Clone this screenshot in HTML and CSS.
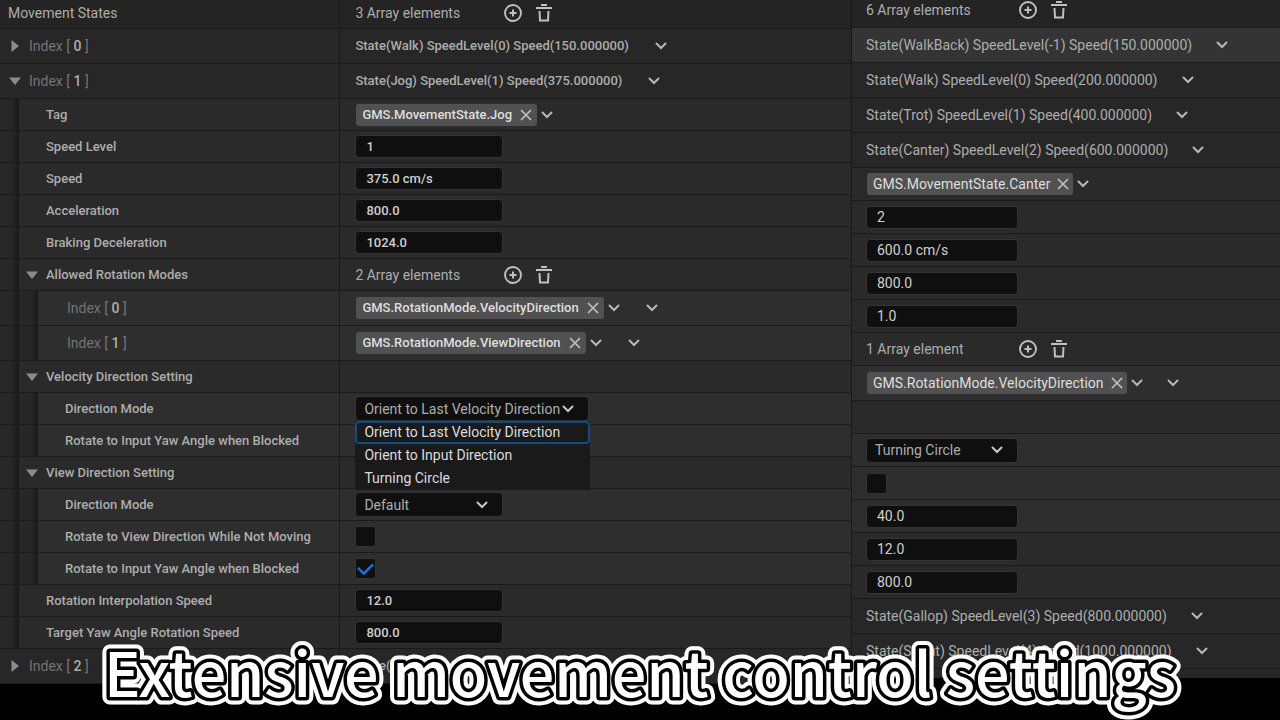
FILE: index.html
```html
<!DOCTYPE html>
<html lang="en">
<head>
	<meta charset="utf-8">
	<title>Movement States</title>
	<link rel="stylesheet" href="styles.css">
</head>
<body>
<svg class="defs">
	<symbol id="chevron" viewBox="0 0 12 8"><path d="M1.500 1.500L6 6l4.500-4.500" fill="none" stroke="currentColor" stroke-width="2" stroke-linecap="round"/></symbol>
	<symbol id="cross" viewBox="0 0 12 12"><path d="M1.500 1.500l9 9M10.500 1.500l-9 9" fill="none" stroke="currentColor" stroke-width="1.700" stroke-linecap="round"/></symbol>
	<symbol id="plus" viewBox="0 0 18 18"><circle cx="9" cy="9" r="8" fill="none" stroke="currentColor" stroke-width="1.900"/><path d="M9 5.500v7M5.500 9h7" stroke="currentColor" stroke-width="2"/></symbol>
	<symbol id="trash" viewBox="0 0 16 18"><path d="M5 1h6M0 4h16" fill="none" stroke="currentColor" stroke-width="2"/><path d="M3.500 7l.500 9.500h8l.500-9.500" fill="none" stroke="currentColor" stroke-width="2"/></symbol>
	<symbol id="closed" viewBox="0 0 12 12"><path d="M2.500 0v12l7.500-6z" fill="currentColor"/></symbol>
	<symbol id="open" viewBox="0 0 12 12"><path d="M0 2.500h12l-6 7.500z" fill="currentColor"/></symbol>
</svg>

<main class="panels">
	<section class="panel left">
		<div class="row head">
			<div class="name">Movement States</div>
			<div class="value"><span class="count">3 Array elements</span><button class="icon" aria-label="Add"><svg class="plus"><use href="#plus"/></svg></button><button class="icon" aria-label="Clear"><svg class="trash"><use href="#trash"/></svg></button></div>
		</div>
		<div class="row index">
			<div class="name"><button class="arrow" aria-label="Expand"><svg><use href="#closed"/></svg></button><span class="idx">Index [ <b>0</b> ]</span></div>
			<div class="value">State(Walk) SpeedLevel(0) Speed(150.000000)<button class="more" aria-label="Options"><svg><use href="#chevron"/></svg></button></div>
		</div>
		<div class="row index">
			<div class="name"><button class="arrow" aria-label="Collapse"><svg><use href="#open"/></svg></button><span class="idx">Index [ <b>1</b> ]</span></div>
			<div class="value">State(Jog) SpeedLevel(1) Speed(375.000000)<button class="more" aria-label="Options"><svg><use href="#chevron"/></svg></button></div>
		</div>
		<div class="row d2">
			<div class="name"><i class="guide"></i><span class="text">Tag</span></div>
			<div class="value"><span class="tag">GMS.MovementState.Jog<button aria-label="Remove"><svg><use href="#cross"/></svg></button></span><button class="pick" aria-label="Pick tag"><svg><use href="#chevron"/></svg></button></div>
		</div>
		<div class="row d2">
			<div class="name"><i class="guide"></i><label class="text" for="level">Speed Level</label></div>
			<div class="value"><input type="text" class="field" id="level" value="1"></div>
		</div>
		<div class="row d2">
			<div class="name"><i class="guide"></i><label class="text" for="speed">Speed</label></div>
			<div class="value"><input type="text" class="field" id="speed" value="375.0 cm/s"></div>
		</div>
		<div class="row d2">
			<div class="name"><i class="guide"></i><label class="text" for="accel">Acceleration</label></div>
			<div class="value"><input type="text" class="field" id="accel" value="800.0"></div>
		</div>
		<div class="row d2">
			<div class="name"><i class="guide"></i><label class="text" for="brake">Braking Deceleration</label></div>
			<div class="value"><input type="text" class="field" id="brake" value="1024.0"></div>
		</div>
		<div class="row d2">
			<div class="name"><i class="guide"></i><button class="arrow" aria-label="Collapse"><svg><use href="#open"/></svg></button>Allowed Rotation Modes</div>
			<div class="value"><span class="count">2 Array elements</span><button class="icon" aria-label="Add"><svg class="plus"><use href="#plus"/></svg></button><button class="icon" aria-label="Clear"><svg class="trash"><use href="#trash"/></svg></button></div>
		</div>
		<div class="row index d3">
			<div class="name"><i class="guide"></i><i class="guide"></i><span class="text idx">Index [ <b>0</b> ]</span></div>
			<div class="value"><span class="tag">GMS.RotationMode.VelocityDirection<button aria-label="Remove"><svg><use href="#cross"/></svg></button></span><button class="pick" aria-label="Pick tag"><svg><use href="#chevron"/></svg></button><button class="more" aria-label="Options"><svg><use href="#chevron"/></svg></button></div>
		</div>
		<div class="row index d3">
			<div class="name"><i class="guide"></i><i class="guide"></i><span class="text idx">Index [ <b>1</b> ]</span></div>
			<div class="value"><span class="tag">GMS.RotationMode.ViewDirection<button aria-label="Remove"><svg><use href="#cross"/></svg></button></span><button class="pick" aria-label="Pick tag"><svg><use href="#chevron"/></svg></button><button class="more" aria-label="Options"><svg><use href="#chevron"/></svg></button></div>
		</div>
		<div class="row d2">
			<div class="name"><i class="guide"></i><button class="arrow" aria-label="Collapse"><svg><use href="#open"/></svg></button>Velocity Direction Setting</div>
			<div class="value"></div>
		</div>
		<div class="row d3">
			<div class="name"><i class="guide"></i><i class="guide"></i><label class="text" for="vmode">Direction Mode</label></div>
			<div class="value">
				<div class="combo wide">
					<select id="vmode"><option>Orient to Last Velocity Direction</option></select>
					<svg><use href="#chevron"/></svg>
					<ul class="menu">
						<li class="current">Orient to Last Velocity Direction</li>
						<li>Orient to Input Direction</li>
						<li>Turning Circle</li>
					</ul>
				</div>
			</div>
		</div>
		<div class="row d3">
			<div class="name"><i class="guide"></i><i class="guide"></i><span class="text">Rotate to Input Yaw Angle when Blocked</span></div>
			<div class="value"></div>
		</div>
		<div class="row d2">
			<div class="name"><i class="guide"></i><button class="arrow" aria-label="Collapse"><svg><use href="#open"/></svg></button>View Direction Setting</div>
			<div class="value"></div>
		</div>
		<div class="row d3">
			<div class="name"><i class="guide"></i><i class="guide"></i><label class="text" for="dmode">Direction Mode</label></div>
			<div class="value"><div class="combo"><select id="dmode"><option>Default</option></select><svg><use href="#chevron"/></svg></div></div>
		</div>
		<div class="row d3">
			<div class="name"><i class="guide"></i><i class="guide"></i><label class="text" for="still">Rotate to View Direction While Not Moving</label></div>
			<div class="value"><input type="checkbox" class="check" id="still"></div>
		</div>
		<div class="row d3">
			<div class="name"><i class="guide"></i><i class="guide"></i><label class="text" for="blocked">Rotate to Input Yaw Angle when Blocked</label></div>
			<div class="value"><input type="checkbox" class="check" id="blocked" checked></div>
		</div>
		<div class="row d2">
			<div class="name"><i class="guide"></i><label class="text" for="interp">Rotation Interpolation Speed</label></div>
			<div class="value"><input type="text" class="field" id="interp" value="12.0"></div>
		</div>
		<div class="row d2">
			<div class="name"><i class="guide"></i><label class="text" for="yaw">Target Yaw Angle Rotation Speed</label></div>
			<div class="value"><input type="text" class="field" id="yaw" value="800.0"></div>
		</div>
		<div class="row index">
			<div class="name"><button class="arrow" aria-label="Expand"><svg><use href="#closed"/></svg></button><span class="idx">Index [ <b>2</b> ]</span></div>
			<div class="value">State(</div>
		</div>
	</section>

	<section class="panel right">
		<div class="row head"><div class="value"><span class="count">6 Array elements</span><button class="icon" aria-label="Add"><svg class="plus"><use href="#plus"/></svg></button><button class="icon" aria-label="Clear"><svg class="trash"><use href="#trash"/></svg></button></div></div>
		<div class="row index hover"><div class="value">State(WalkBack) SpeedLevel(-1) Speed(150.000000)<button class="more" aria-label="Options"><svg><use href="#chevron"/></svg></button></div></div>
		<div class="row index"><div class="value">State(Walk) SpeedLevel(0) Speed(200.000000)<button class="more" aria-label="Options"><svg><use href="#chevron"/></svg></button></div></div>
		<div class="row index"><div class="value">State(Trot) SpeedLevel(1) Speed(400.000000)<button class="more" aria-label="Options"><svg><use href="#chevron"/></svg></button></div></div>
		<div class="row index"><div class="value">State(Canter) SpeedLevel(2) Speed(600.000000)<button class="more" aria-label="Options"><svg><use href="#chevron"/></svg></button></div></div>
		<div class="row d2"><div class="value"><span class="tag">GMS.MovementState.Canter<button aria-label="Remove"><svg><use href="#cross"/></svg></button></span><button class="pick" aria-label="Pick tag"><svg><use href="#chevron"/></svg></button></div></div>
		<div class="row d2"><div class="value"><input type="text" class="field" aria-label="Speed Level" value="2"></div></div>
		<div class="row d2"><div class="value"><input type="text" class="field" aria-label="Speed" value="600.0 cm/s"></div></div>
		<div class="row d2"><div class="value"><input type="text" class="field" aria-label="Acceleration" value="800.0"></div></div>
		<div class="row d2"><div class="value"><input type="text" class="field" aria-label="Braking Deceleration" value="1.0"></div></div>
		<div class="row d2"><div class="value"><span class="count">1 Array element</span><button class="icon" aria-label="Add"><svg class="plus"><use href="#plus"/></svg></button><button class="icon" aria-label="Clear"><svg class="trash"><use href="#trash"/></svg></button></div></div>
		<div class="row index d3"><div class="value"><span class="tag">GMS.RotationMode.VelocityDirection<button aria-label="Remove"><svg><use href="#cross"/></svg></button></span><button class="pick" aria-label="Pick tag"><svg><use href="#chevron"/></svg></button><button class="more" aria-label="Options"><svg><use href="#chevron"/></svg></button></div></div>
		<div class="row d2"><div class="value"></div></div>
		<div class="row d3"><div class="value"><div class="combo"><select aria-label="Direction Mode"><option>Turning Circle</option></select><svg><use href="#chevron"/></svg></div></div></div>
		<div class="row d3"><div class="value"><input type="checkbox" class="check" aria-label="Rotate to Input Yaw Angle when Blocked"></div></div>
		<div class="row d3"><div class="value"><input type="text" class="field" aria-label="Turning Rate" value="40.0"></div></div>
		<div class="row d2"><div class="value"><input type="text" class="field" aria-label="Rotation Interpolation Speed" value="12.0"></div></div>
		<div class="row d2"><div class="value"><input type="text" class="field" aria-label="Target Yaw Angle Rotation Speed" value="800.0"></div></div>
		<div class="row index"><div class="value">State(Gallop) SpeedLevel(3) Speed(800.000000)<button class="more" aria-label="Options"><svg><use href="#chevron"/></svg></button></div></div>
		<div class="row index"><div class="value">State(Sprint) SpeedLevel(4) Speed(1000.000000)<button class="more" aria-label="Options"><svg><use href="#chevron"/></svg></button></div></div>
		<div class="row stub"></div>
	</section>
</main>

<svg class="caption">
	<use class="ring" href="#line"/>
	<g class="face"><text id="line" x="50%" y="61">Extensive movement control settings</text></g>
</svg>
</body>
</html>
```
FILE: styles.css
```css
*{margin: 0; padding: 0; box-sizing: border-box;}
body{
	background: #000;
	color: #adadad;
	font: 14px/20px Roboto, "Liberation Sans", sans-serif;
	min-height: 100vh;
	position: relative;
	overflow: hidden;
}
button{ background: none; border: 0; color: inherit; cursor: pointer; display: flex;}
svg{ display: block;}
.defs{ display: none;}

.panels{
	display: grid;
	grid-template-columns: 851fr 429fr;
	align-items: start;
}
.left{ font-size: 13px; font-weight: 500;}
.right{ border-left: 1px solid #191919;}

/* rows */
.row{
	display: grid;
	grid-template-columns: 2fr 3fr;
	height: 32px;
	background: #272727;
	border-bottom: 1px solid #1a1a1a;
}
.right .row{ grid-template-columns: 1fr; height: 33px;}
.row.index, .right .row.index{ height: 35px;}
.row.head{ height: 29px; background: #242424; padding-bottom: 3px;}
.right .row.head{ height: 28px; padding-bottom: 8px;}
.right .row.stub{ height: 9px; border: 0;}
.row.d2{ background: #2a2a2a;}
.row.d3{ background: #2e2e2e;}
.row.hover{ background: #343434;}
.name, .value{ display: flex; align-items: center; min-width: 0; white-space: nowrap;}
.name{ border-right: 1px solid #1a1a1a;}
.value{ padding-left: 15px;}
.right .value{ padding-left: 14px;}
.head .name{ padding-left: 8px; font-size: 14px; font-weight: 400;}

/* tree */
.guide{
	align-self: stretch;
	flex: none;
	width: 19px;
	background: linear-gradient(to right, #272727 60%, #191919);
}
.text{ padding-left: 27px;}
.idx{ color: #747474; font-size: 14px; font-weight: 400;}
.idx b{ color: #adadad; font-weight: 500;}
.text.idx{ padding-left: 29px;}
.arrow{ flex: none; width: 27px; padding-left: 7px; color: #8c8c8c;}
.arrow svg{ width: 12px; height: 12px;}
.index .arrow{ width: 29px; padding-left: 9px;}

/* value widgets */
.count{ width: 149px; font-size: 14px; font-weight: 400;}
.right .count{ width: 153px;}
.icon{ margin-right: 14px; color: #c0c0c0;}
.plus{ width: 18px; height: 18px;}
.trash{ width: 16px; height: 18px;}
.more{ margin-left: 26px; color: #b8b8b8;}
.right .more{ margin-left: 24px;}
.pick{ margin-left: 4px; color: #b8b8b8;}
.more svg, .pick svg, .combo svg{ width: 12px; height: 8px;}
.tag{
	display: flex;
	align-items: center;
	gap: 7px;
	height: 22px;
	padding: 0 4px 0 6px;
	margin-left: 1px;
	border-radius: 3px;
	background: #515151;
	color: #dedede;
}
.left .tag{ gap: 8px; padding-right: 5px;}
.tag svg{ width: 12px; height: 12px; color: #c0c0c0;}
.field, .combo{
	width: 148px;
	border: 1px solid #343434;
	border-radius: 4px;
	background: #0f0f0f;
	color: #cfcfcf;
	font: inherit;
}
.field{ height: 23px; padding: 0 10px 1px; outline: none;}
.right .field, .right .combo{ width: 152px;}
.combo{ position: relative; display: flex; align-items: center; height: 25px; padding-right: 14px; font-size: 14px; font-weight: 400;}
.combo.wide{ width: 234px;}
.combo select{
	flex: 1;
	min-width: 0;
	height: 23px;
	padding-left: 8px;
	appearance: none;
	border: 0;
	outline: none;
	background: none;
	color: #adadad;
	font: inherit;
}
.combo svg{ flex: none; color: #c8c8c8;}
.menu{
	position: absolute; z-index: 2;
	top: 24px; left: -1px; right: -2px;
	list-style: none;
	background: #1a1a1a;
	color: #dcdcdc;
}
.menu li{ height: 23px; line-height: 22px; padding-left: 9px;}
.menu .current{
	line-height: 18px;
	padding-left: 7px;
	border: 2px solid #154a80;
	border-radius: 4px;
}
.check{
	appearance: none;
	display: grid;
	place-items: center;
	width: 21px; height: 21px;
	border: 1px solid #343434;
	border-radius: 3px;
	background: #0f0f0f;
}
.check:checked::after{
	content: "";
	width: 12px; height: 7px;
	margin-bottom: 3px;
	border: solid #0e70d8;
	border-width: 0 0 3px 3px;
	border-radius: 1px;
	transform: rotate(-45deg);
}

/* caption over the bottom edge */
.caption{
	position: absolute; z-index: 3;
	left: 0; bottom: 0;
	width: 100%; height: 84px;
	font: 500 61px "Noto Sans CJK SC", "Noto Sans", sans-serif;
	text-anchor: middle;
	fill: #fff;
	stroke-linejoin: round;
	paint-order: stroke fill;
}
.ring{ stroke: #fff; stroke-width: 15px;}
.face{ stroke: #000; stroke-width: 7px;}
```
